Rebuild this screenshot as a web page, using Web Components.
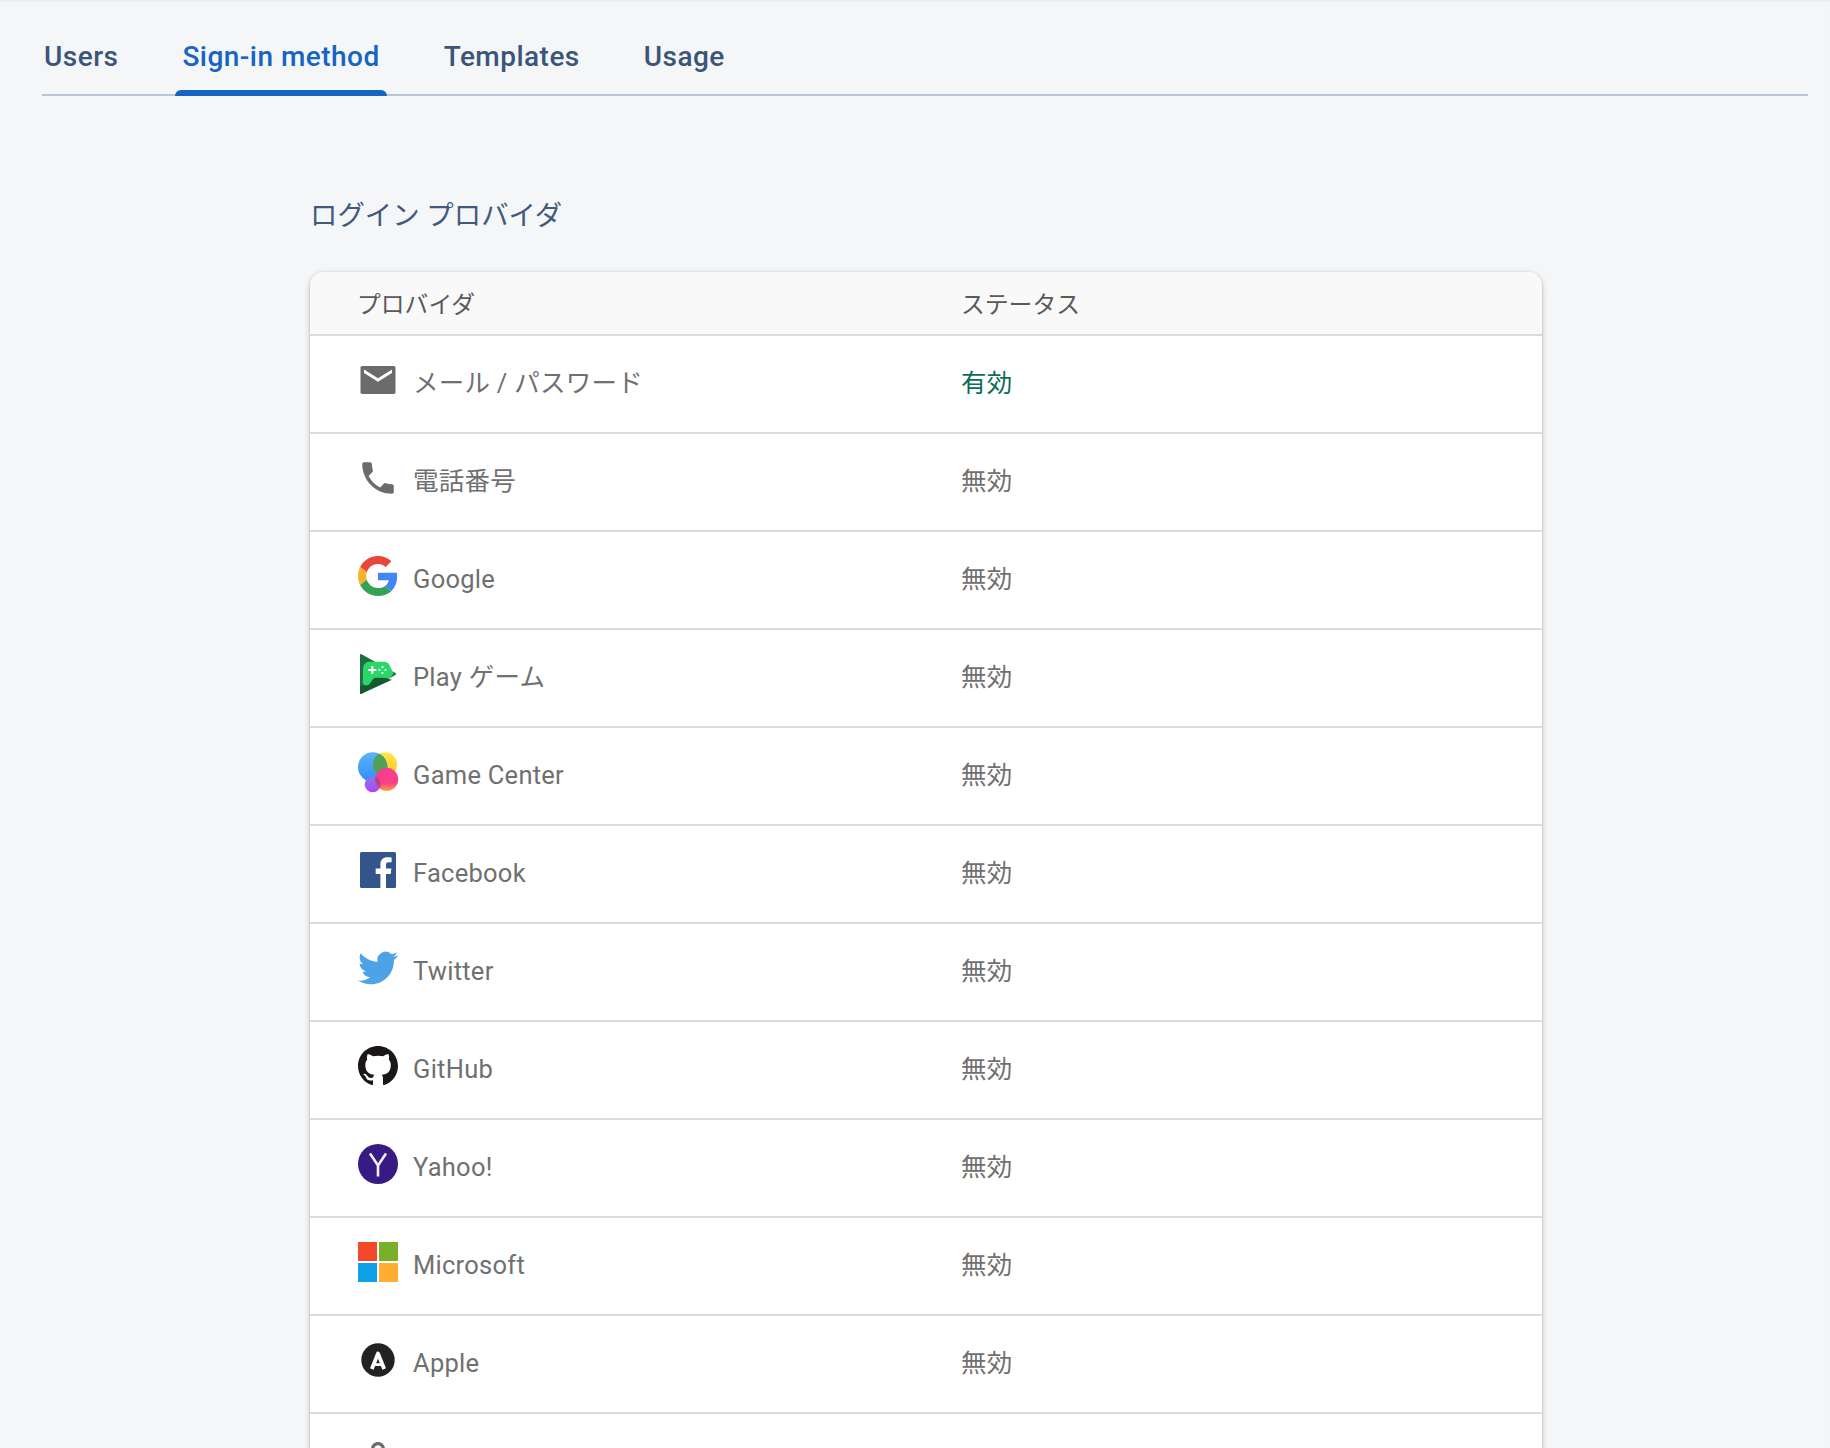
<!DOCTYPE html>
<html lang="ja">
<head>
<meta charset="utf-8">
<title>Sign-in method</title>
<style>
html,body{margin:0;padding:0;height:1448px;overflow:hidden;background:#f5f6f8}
body{font-family:Roboto,"Noto Sans CJK JP",sans-serif}
</style>
</head>
<body>
<auth-page>
  <auth-tabs>
    <auth-tab>Users</auth-tab>
    <auth-tab active>Sign-in method</auth-tab>
    <auth-tab>Templates</auth-tab>
    <auth-tab>Usage</auth-tab>
  </auth-tabs>
  <provider-card heading="ログイン プロバイダ" col-a="プロバイダ" col-b="ステータス">
    <provider-row icon="mail" status="有効" on>メール / パスワード</provider-row>
    <provider-row icon="phone" status="無効">電話番号</provider-row>
    <provider-row icon="google" status="無効">Google</provider-row>
    <provider-row icon="play" status="無効">Play ゲーム</provider-row>
    <provider-row icon="gamecenter" status="無効">Game Center</provider-row>
    <provider-row icon="facebook" status="無効">Facebook</provider-row>
    <provider-row icon="twitter" status="無効">Twitter</provider-row>
    <provider-row icon="github" status="無効">GitHub</provider-row>
    <provider-row icon="yahoo" status="無効">Yahoo!</provider-row>
    <provider-row icon="microsoft" status="無効">Microsoft</provider-row>
    <provider-row icon="apple" status="無効">Apple</provider-row>
    <provider-row icon="anon" status="無効">匿名</provider-row>
  </provider-card>
</auth-page>
<script>
const FONT='Roboto,"Noto Sans CJK JP",sans-serif';
const ICONS={
mail:`<path fill="#6b6b6b" d="M21 4H3c-.55 0-1 .45-1 1v14c0 .55.45 1 1 1h18c.55 0 1-.45 1-1V5c0-.55-.45-1-1-1zm-1 4l-8 5-8-5V6l8 5 8-5z" transform="scale(1.75)"/>`,
phone:`<path fill="#6b6b6b" d="M6.62 10.79c1.44 2.83 3.76 5.14 6.59 6.59l2.2-2.2c.27-.27.67-.36 1.02-.24 1.12.37 2.33.57 3.57.57.55 0 1 .45 1 1V20c0 .55-.45 1-1 1-9.39 0-17-7.61-17-17 0-.55.45-1 1-1h3.5c.55 0 1 .45 1 1 0 1.25.2 2.45.57 3.57.11.35.03.74-.25 1.02l-2.2 2.2z" transform="scale(1.75)"/>`,
google:`<g transform="translate(1 1) scale(.8333)"><path fill="#E8453C" d="M24 9.5c3.54 0 6.71 1.22 9.21 3.6l6.85-6.85C35.9 2.38 30.47 0 24 0 14.62 0 6.51 5.38 2.56 13.22l7.98 6.19C12.43 13.72 17.74 9.5 24 9.5z"/><path fill="#4285F4" d="M46.98 24.55c0-1.57-.15-3.09-.38-4.55H24v9.02h12.94c-.58 2.96-2.26 5.48-4.78 7.18l7.73 6c4.51-4.18 7.09-10.36 7.09-17.65z"/><path fill="#FBB12D" d="M10.53 28.59c-.48-1.45-.76-2.99-.76-4.59s.27-3.14.76-4.59l-7.98-6.19C.92 16.46 0 20.12 0 24c0 3.88.92 7.54 2.56 10.78l7.97-6.19z"/><path fill="#34A356" d="M24 48c6.48 0 11.93-2.13 15.89-5.81l-7.73-6c-2.15 1.45-4.92 2.3-8.16 2.3-6.26 0-11.57-4.22-13.47-9.91l-7.98 6.19C6.51 42.62 14.62 48 24 48z"/></g>`,
play:`<path fill="#1C7040" d="M3 2.2c0-.9.8-1.4 1.5-1L38.4 20c.8.5.8 1.500 0 2L4.500 40.800c-.7.4-1.500-.1-1.500-1z"/><path fill="#135A30" d="M3 39.800V33l8-1 7-7h9l8 1.800L4.500 40.800c-.7.4-1.500-.1-1.500-1z"/><path fill="#2BD668" d="M6 15.500C6.400 11.200 9 8.800 12.500 8.800h14.500c2.600 0 4.200 1.100 5.400 3.200L36.500 20.500 34 24c-1 1.200-2.500 1.400-4 1.200L27 24.800h-8.500c-.9 0-1.600.4-2.200 1L12 31.500c-1.500 1.600-6.200 1-6.200-1.800z"/><path fill="none" stroke="#fff" stroke-width="2" d="M15.300 13v8M11.300 17h8"/><circle cx="25.500" cy="14" r="1.100" fill="#fff"/><circle cx="25.500" cy="20" r="1.100" fill="#fff"/><circle cx="22.500" cy="17" r="1.100" fill="#fff"/><circle cx="28.500" cy="17" r="1.100" fill="#fff"/>`,
gamecenter:`<defs>
<linearGradient id="gb" x1="0" y1="0" x2="0" y2="1"><stop offset="0" stop-color="#5cb4fb"/><stop offset="1" stop-color="#2f8df5"/></linearGradient>
<linearGradient id="gy" x1="0" y1="0" x2="0" y2="1"><stop offset="0" stop-color="#ffe649"/><stop offset="1" stop-color="#fcc51c"/></linearGradient>
<linearGradient id="gp" x1="0" y1="0" x2="0" y2="1"><stop offset="0" stop-color="#f43f8d"/><stop offset=".65" stop-color="#fb3e88"/><stop offset="1" stop-color="#fb9a3e"/></linearGradient>
<linearGradient id="gv" x1="0" y1="0" x2="0" y2="1"><stop offset="0" stop-color="#7b7df2"/><stop offset="1" stop-color="#b143ee"/></linearGradient>
<clipPath id="cb"><circle cx="15.700" cy="16" r="14.700"/></clipPath>
<clipPath id="cp"><circle cx="29.700" cy="28.300" r="11.500"/></clipPath></defs>
<circle cx="28" cy="13.300" r="12" fill="url(#gy)"/>
<circle cx="15.700" cy="16" r="14.700" fill="url(#gb)"/>
<circle cx="28" cy="13.300" r="12" fill="#4ea155" clip-path="url(#cb)"/>
<circle cx="15.700" cy="33.300" r="8" fill="url(#gv)"/>
<circle cx="29.700" cy="28.300" r="11.500" fill="url(#gp)"/>
<circle cx="15.700" cy="33.300" r="8" fill="#a03f8f" fill-opacity=".75" clip-path="url(#cp)"/>`,
facebook:`<g transform="translate(3 0)"><rect width="36" height="36" y="3" rx="1.500" fill="#34558B"/><path transform="translate(0 3)" fill="#fff" d="M26 36V22h4.700l.7-5.500H26v-3.500c0-1.600.45-2.700 2.700-2.700h2.900V5.500c-.5-.07-2.200-.2-4.200-.2-4.160 0-7 2.540-7 7.200v4h-4.700V22h4.700v14z"/></g>`,
twitter:`<path fill="#4CA3E8" transform="translate(1 1) scale(1.667)" d="M23.953 4.570a10 10 0 01-2.825.775 4.958 4.958 0 002.163-2.723c-.951.555-2.005.959-3.127 1.184a4.920 4.920 0 00-8.384 4.482C7.690 8.095 4.067 6.130 1.640 3.162a4.822 4.822 0 00-.666 2.475c0 1.710.870 3.213 2.188 4.096a4.904 4.904 0 01-2.228-.616v.06a4.923 4.923 0 003.946 4.827 4.996 4.996 0 01-2.212.085 4.936 4.936 0 004.604 3.417 9.867 9.867 0 01-6.102 2.105c-.390 0-.779-.023-1.170-.067a13.995 13.995 0 007.557 2.209c9.053 0 13.998-7.496 13.998-13.985 0-.210 0-.420-.015-.630A9.935 9.935 0 0024 4.590z"/>`,
github:`<path fill="#1B1717" transform="translate(1 1) scale(2.500)" d="M8 0C3.580 0 0 3.580 0 8c0 3.540 2.290 6.530 5.470 7.590.4.070.550-.170.550-.380 0-.190-.010-.820-.010-1.490-2.010.370-2.530-.490-2.690-.940-.090-.230-.480-.940-.820-1.130-.280-.150-.680-.520-.010-.530.630-.010 1.080.580 1.230.820.720 1.210 1.870.870 2.330.660.070-.520.280-.870.510-1.070-1.780-.2-3.640-.890-3.640-3.950 0-.870.310-1.590.820-2.150-.080-.2-.360-1.020.080-2.120 0 0 .670-.210 2.200.820.640-.180 1.320-.270 2-.270.680 0 1.360.090 2 .270 1.530-1.040 2.200-.820 2.200-.820.440 1.100.160 1.920.080 2.120.510.560.820 1.270.820 2.150 0 3.070-1.870 3.750-3.650 3.950.290.250.540.730.540 1.480 0 1.070-.010 1.930-.010 2.200 0 .210.150.460.550.380A8.013 8.013 0 0016 8c0-4.420-3.580-8-8-8z"/>`,
yahoo:`<circle cx="21" cy="21" r="20" fill="#371A84"/><path d="M13 10.500l8 12 8-12M21 22.500v11" fill="none" stroke="#f4f2fa" stroke-width="2.600"/>`,
microsoft:`<rect x="1" y="1" width="19" height="19" fill="#F1492A"/><rect x="22" y="1" width="19" height="19" fill="#7BAE29"/><rect x="1" y="22" width="19" height="19" fill="#0EA1E8"/><rect x="22" y="22" width="19" height="19" fill="#FFAD33"/>`,
apple:`<circle cx="21" cy="21" r="16.700" fill="#222"/><path d="M14.800 30L21 14.500 27.200 30" fill="none" stroke="#fff" stroke-width="3.800" stroke-linejoin="round"/><path d="M16.500 25.600h9" stroke="#fff" stroke-width="2.800" fill="none"/>`,
anon:`<path fill="#6b6b6b" transform="translate(0 -2) scale(1.750)" d="M12 5.900c1.160 0 2.100.94 2.100 2.100s-.94 2.100-2.100 2.100S9.900 9.160 9.900 8s.94-2.100 2.100-2.100m0 9c2.970 0 6.100 1.460 6.100 2.100v1.100H5.900V17c0-.64 3.130-2.100 6.100-2.100M12 4C9.790 4 8 5.790 8 8s1.790 4 4 4 4-1.790 4-4-1.790-4-4-4zm0 9c-2.670 0-8 1.340-8 4v3h16v-3c0-2.660-5.330-4-8-4z"/>`
};
class AuthPage extends HTMLElement{
  constructor(){super();this.attachShadow({mode:'open'}).innerHTML=`<style>
  :host{display:block;padding-top:2px;box-shadow:inset 0 2px 2px -1px rgba(60,64,67,.08);height:1448px;box-sizing:border-box;overflow:hidden;font-family:${FONT}}
  </style><slot></slot>`}
}
class AuthTabs extends HTMLElement{
  constructor(){super();this.attachShadow({mode:'open'}).innerHTML=`<style>
  :host{display:flex;gap:50px;margin:0 22px 0 42px;height:94px;box-sizing:border-box;border-bottom:2px solid #b9c6d6;align-items:stretch}
  ::slotted(auth-tab:first-child){--pad-left:2px}
  </style><slot></slot>`}
}
class AuthTab extends HTMLElement{
  constructor(){super();this.attachShadow({mode:'open'}).innerHTML=`<style>
  :host{display:block;position:relative;box-sizing:border-box;padding:39px 7px 0 var(--pad-left,7px);font:500 28px/32px ${FONT};letter-spacing:.47px;color:#3b5578;white-space:nowrap}
  :host([active]){color:#1565c4}
  :host([active])::after{content:"";position:absolute;left:0;right:0;bottom:-2px;height:6px;background:#1565c4;border-radius:6px 6px 0 0}
  </style><slot></slot>`}
}
class ProviderCard extends HTMLElement{
  constructor(){super();this.attachShadow({mode:'open'}).innerHTML=`<style>
  :host{display:block;margin:0 0 0 310px;width:1232px;font-family:${FONT}}
  h2{margin:0;height:176px;box-sizing:border-box;padding-top:102px;font:400 27.4px/36px ${FONT};color:#3f5a7c}
  .card{background:#fff;border-radius:14px 14px 0 0;box-shadow:0 1px 3px rgba(60,64,67,.35),0 2px 6px 1px rgba(60,64,67,.12);overflow:hidden}
  .head{display:grid;grid-template-columns:651px 1fr;height:62px;align-items:center;background:#f9f9f9;border-bottom:2px solid #dcdcdc;font:400 23.8px/30px ${FONT};color:#5a5a5a}
  .head span{padding-top:4px}
  .head span:first-child{padding-left:47px}
  </style><h2></h2><div class="card"><div class="head"><span class="a"></span><span class="b"></span></div><slot></slot></div>`;
  }
  connectedCallback(){
    const s=this.shadowRoot;
    s.querySelector('h2').textContent=this.getAttribute('heading');
    s.querySelector('.a').textContent=this.getAttribute('col-a');
    s.querySelector('.b').textContent=this.getAttribute('col-b');
  }
}
class ProviderIcon extends HTMLElement{
  static get observedAttributes(){return ['name']}
  constructor(){super();this.attachShadow({mode:'open'})}
  attributeChangedCallback(){
    this.shadowRoot.innerHTML=`<style>:host{display:block;width:42px;height:42px}svg{display:block;width:42px;height:42px}</style><svg viewBox="0 0 42 42" xmlns="http://www.w3.org/2000/svg">${ICONS[this.getAttribute('name')]||''}</svg>`;
  }
}
class ProviderRow extends HTMLElement{
  constructor(){super();this.attachShadow({mode:'open'}).innerHTML=`<style>
  :host{display:grid;grid-template-columns:651px 1fr;height:96px;border-bottom:2px solid #dcdcdc;background:#fff;font:400 25.5px/32px ${FONT};color:#707070;letter-spacing:.26px}
  .name{display:flex;padding-left:47px;gap:14px}
  provider-icon{flex:none;margin-top:23px}
  .label{align-self:center;padding-bottom:3px}
  .status{display:flex;align-items:center;padding-bottom:2px}
  :host([on]) .status{color:#0f6b5c}
  </style><div class="name"><provider-icon></provider-icon><span class="label"><slot></slot></span></div><div class="status"></div>`;
  }
  connectedCallback(){
    this.shadowRoot.querySelector('provider-icon').setAttribute('name',this.getAttribute('icon'));
    this.shadowRoot.querySelector('.status').textContent=this.getAttribute('status');
  }
}
customElements.define('provider-icon',ProviderIcon);
customElements.define('auth-page',AuthPage);
customElements.define('auth-tabs',AuthTabs);
customElements.define('auth-tab',AuthTab);
customElements.define('provider-card',ProviderCard);
customElements.define('provider-row',ProviderRow);
</script>
</body>
</html>
